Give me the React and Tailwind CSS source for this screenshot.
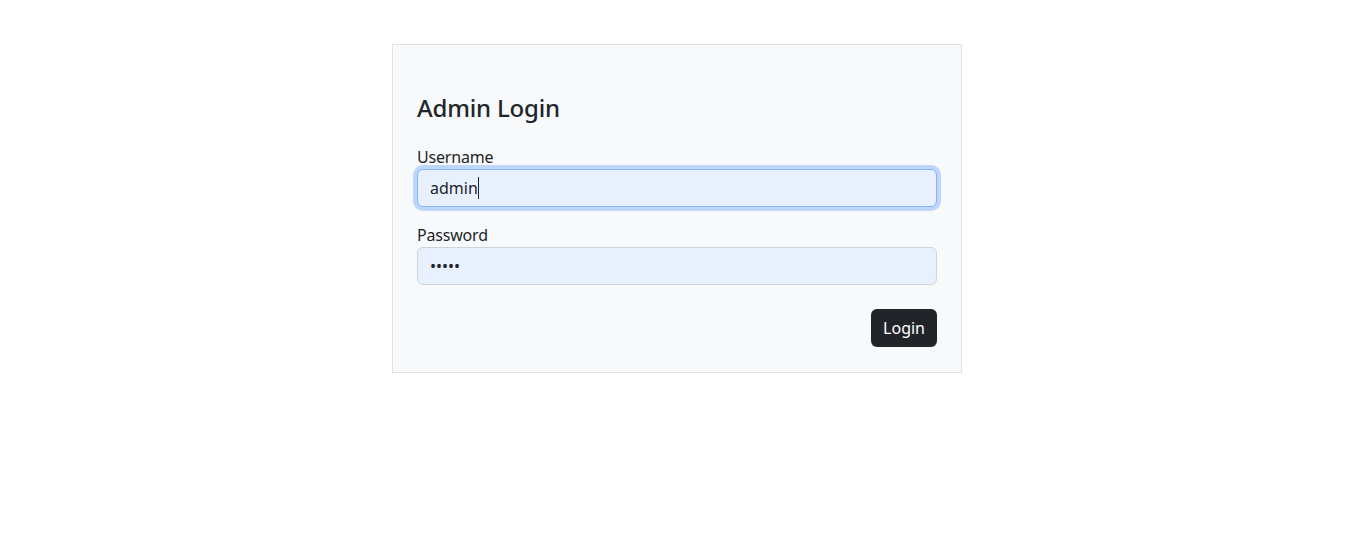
export default function App() {
  return (
    <div className="min-h-[553px] bg-white font-['Noto_Sans',sans-serif] text-[#212529]">
      <div className="pt-[44px] pl-[2px] flex justify-center">
        <div className="w-[570px] border border-[#dee2e6] bg-[#f8f9fa] px-6 pt-12 pb-[25px]">
          <h4 className="text-2xl font-medium leading-[29px] mb-[23px] tracking-[-0.2px]">Admin Login</h4>

          <div className="mb-4">
            <label className="block text-base leading-6 tracking-[-0.2px]">Username</label>
            <div className="relative">
              <input
                type="text"
                defaultValue="admin"
                className="block w-full h-[38px] px-3 text-base rounded-md bg-[#e8f0fe] border border-[#86b7fe] shadow-[0_0_0_4px_rgba(13,110,253,0.25)] outline-none"
              />
              <span className="pointer-events-none absolute left-[13px] top-0 h-[38px] flex items-center text-base text-transparent">
                admin
                <span className="inline-block w-px h-[22px] bg-[#212529]" />
              </span>
            </div>
          </div>

          <div className="mb-6">
            <label className="block text-base leading-6 tracking-[-0.2px]">Password</label>
            <input
              type="password"
              defaultValue="admin"
              className="block w-full h-[38px] px-3 text-base rounded-md bg-[#e8f0fe] border border-[#ced4da] outline-none"
            />
          </div>

          <div className="flex justify-end">
            <button className="h-[38px] px-3 rounded-md bg-[#212529] text-white text-base">
              Login
            </button>
          </div>
        </div>
      </div>
    </div>
  );
}
